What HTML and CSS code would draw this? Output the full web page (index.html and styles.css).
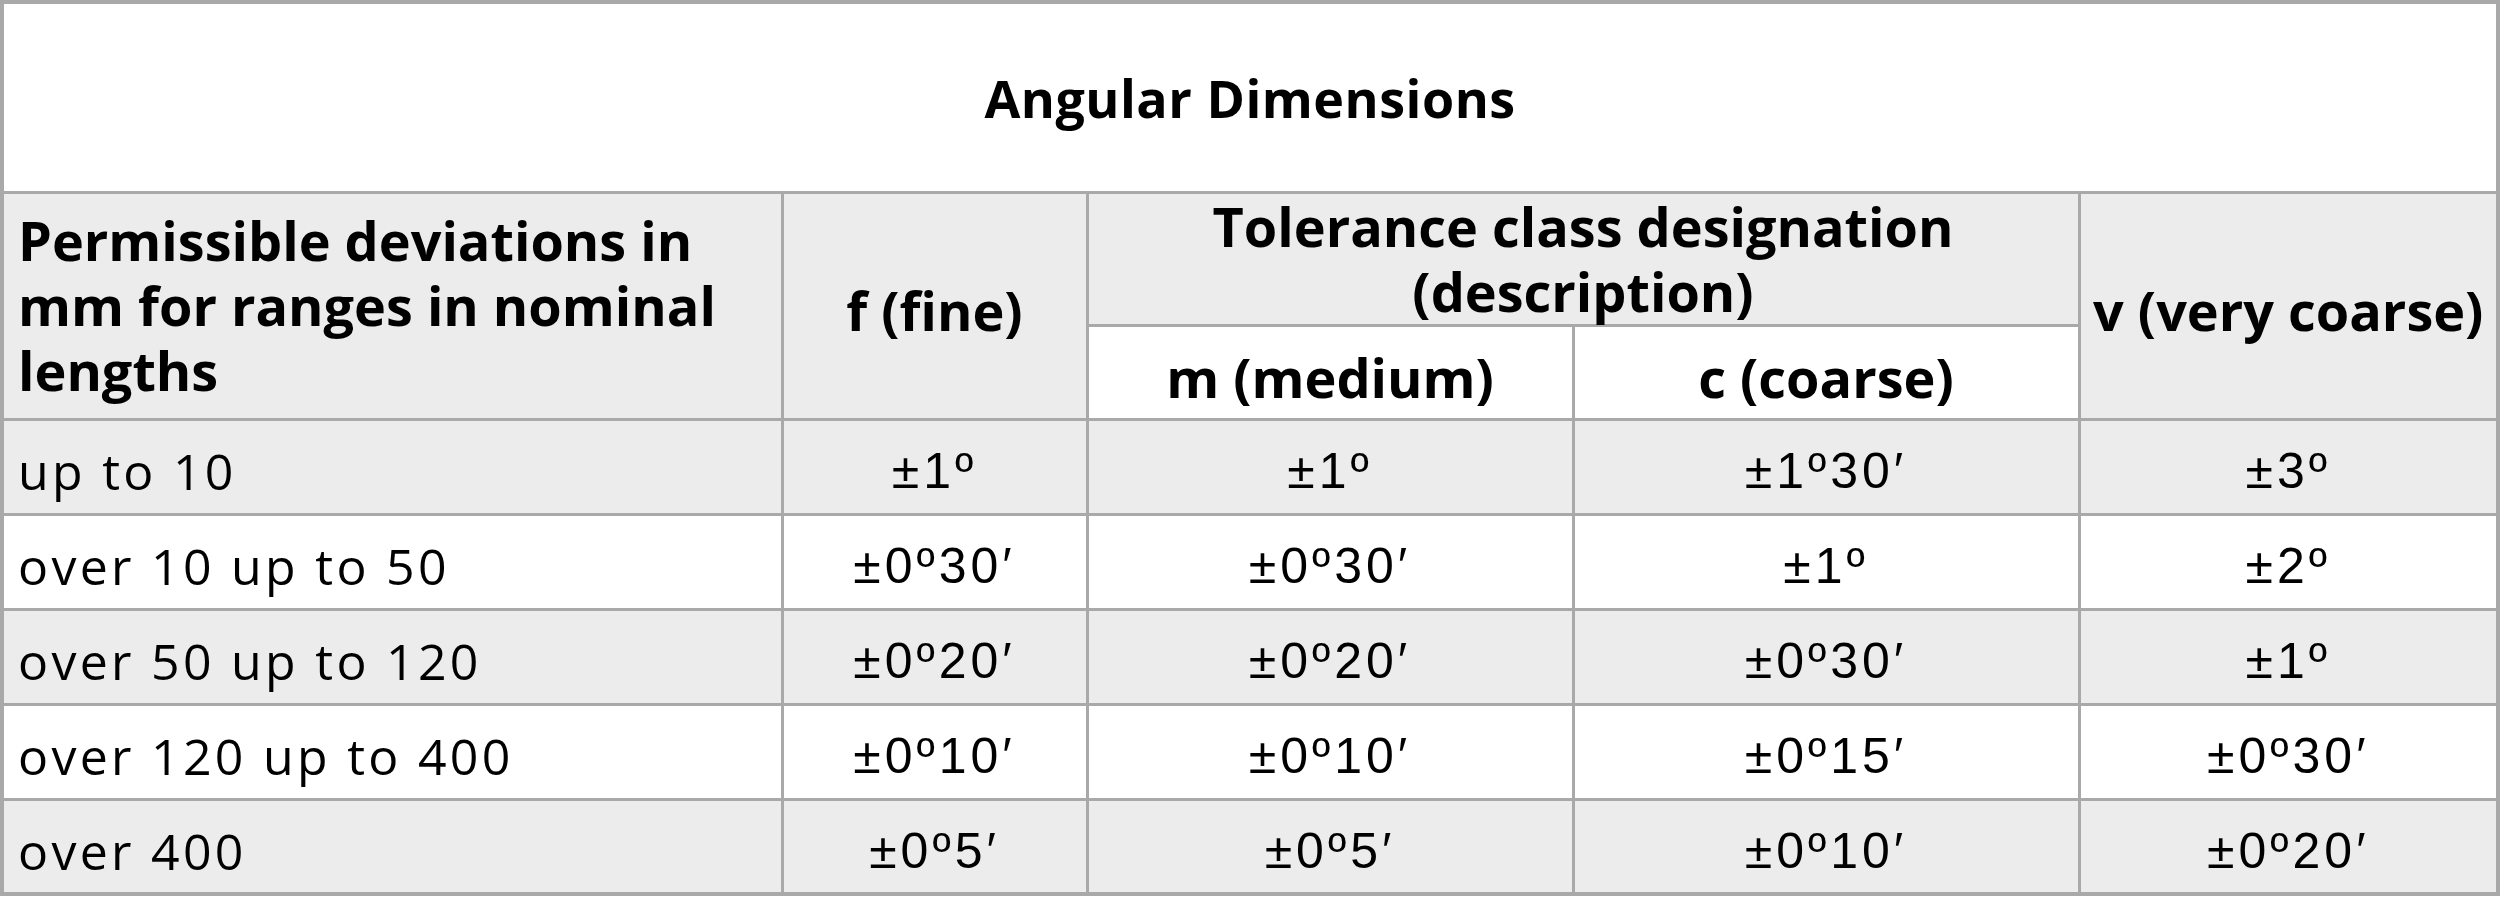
FILE: index.html
```html
<!DOCTYPE html>
<html lang="en">
<head>
<meta charset="utf-8">
<title>Angular Dimensions</title>
<link rel="stylesheet" href="styles.css">
</head>
<body>
<table class="tol-table">
  <colgroup>
    <col class="c-range">
    <col class="c-fine">
    <col class="c-medium">
    <col class="c-coarse">
    <col class="c-vcoarse">
  </colgroup>
  <thead>
    <tr class="row-title">
      <th colspan="5" class="title">Angular Dimensions</th>
    </tr>
    <tr class="row-head1">
      <th rowspan="2" class="head head-left">Permissible deviations in mm for ranges in nominal lengths</th>
      <th rowspan="2" class="head single">f (fine)</th>
      <th colspan="2" class="head">Tolerance class designation (description)</th>
      <th rowspan="2" class="head single nowrap">v (very coarse)</th>
    </tr>
    <tr class="row-head2">
      <th class="head head-white single">m (medium)</th>
      <th class="head head-white single">c (coarse)</th>
    </tr>
  </thead>
  <tbody>
    <tr class="row-gray">
      <td class="range">up to 10</td>
      <td class="val">±1º</td>
      <td class="val">±1º</td>
      <td class="val">±1º30′</td>
      <td class="val">±3º</td>
    </tr>
    <tr class="row-white">
      <td class="range">over 10 up to 50</td>
      <td class="val">±0º30′</td>
      <td class="val">±0º30′</td>
      <td class="val">±1º</td>
      <td class="val">±2º</td>
    </tr>
    <tr class="row-gray">
      <td class="range">over 50 up to 120</td>
      <td class="val">±0º20′</td>
      <td class="val">±0º20′</td>
      <td class="val">±0º30′</td>
      <td class="val">±1º</td>
    </tr>
    <tr class="row-white">
      <td class="range">over 120 up to 400</td>
      <td class="val">±0º10′</td>
      <td class="val">±0º10′</td>
      <td class="val">±0º15′</td>
      <td class="val">±0º30′</td>
    </tr>
    <tr class="row-gray">
      <td class="range">over 400</td>
      <td class="val">±0º5′</td>
      <td class="val">±0º5′</td>
      <td class="val">±0º10′</td>
      <td class="val">±0º20′</td>
    </tr>
  </tbody>
</table>
</body>
</html>
```

FILE: styles.css
```css
html, body {
  margin: 0;
  padding: 0;
  background: #ffffff;
}

body {
  font-family: "Open Sans", "Noto Sans", sans-serif;
  color: #000000;
}

.tol-table {
  width: 2496px;
  table-layout: fixed;
  border-collapse: collapse;
  border: 4px solid #a9a9a9;
}

.c-range { width: 780px; }
.c-fine { width: 305px; }
.c-medium { width: 486px; }
.c-coarse { width: 506px; }
.c-vcoarse { width: 419px; }

.tol-table th,
.tol-table td {
  border: 3px solid #a9a9a9;
  padding: 0 14px;
}

.row-title { height: 190px; }
.row-head1 { height: 133px; }
.row-head2 { height: 94px; }
.tol-table tbody tr { height: 95px; }

.title {
  background: #ffffff;
  font-size: 52px;
  font-weight: 700;
  letter-spacing: 0.5px;
  text-align: center;
  border-bottom-width: 7px;
}

.head {
  background: #ececec;
  font-size: 54px;
  font-weight: 700;
  line-height: 65px;
  text-align: center;
  vertical-align: middle;
}

.head.single {
  padding-top: 10px;
}

.head-left {
  text-align: left;
}

.head-white {
  background: #ffffff;
}

.head.nowrap {
  white-space: nowrap;
  padding-left: 2px;
  padding-right: 2px;
}

.row-gray td { background: #ececec; }
.row-white td { background: #ffffff; }

.tol-table td {
  padding-top: 9px;
}

.range {
  font-size: 50px;
  font-weight: 400;
  letter-spacing: 3.3px;
  text-align: left;
}

.val {
  font-family: "Liberation Sans", Arial, sans-serif;
  font-size: 50px;
  font-weight: 400;
  letter-spacing: 4px;
  text-align: center;
}
```
